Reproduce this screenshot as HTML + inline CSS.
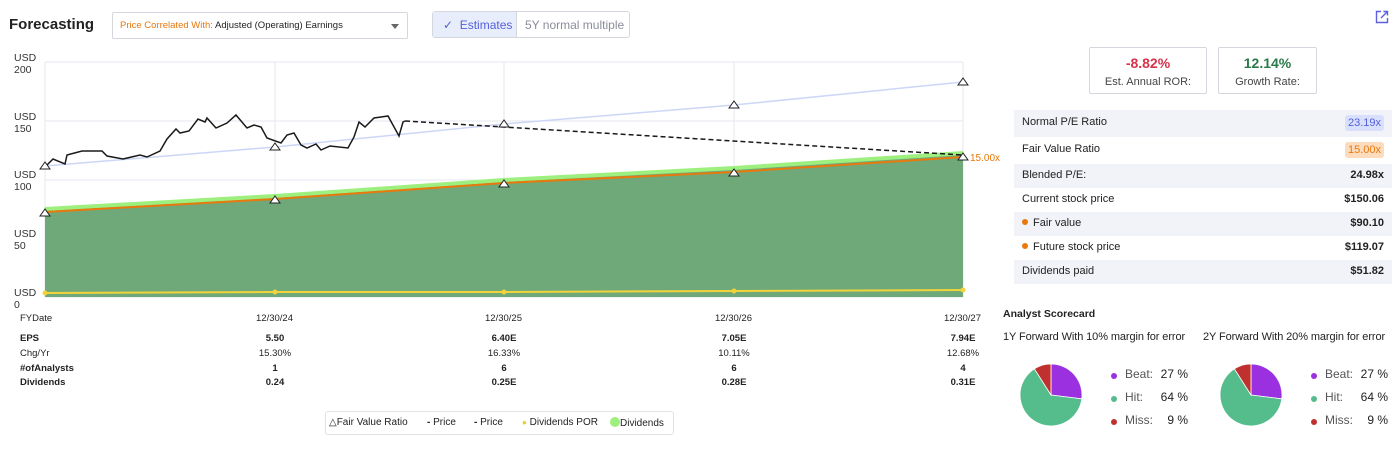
<!DOCTYPE html>
<html><head><meta charset="utf-8"><style>
*{margin:0;padding:0;box-sizing:border-box}
body{width:1400px;height:452px;background:#fff;font-family:"Liberation Sans",sans-serif;color:#222;position:relative;overflow:hidden}
.a{position:absolute;white-space:nowrap}
.t{font-size:10.5px}
.b{font-weight:bold}
.row{position:absolute;left:1014px;width:378px;font-size:11px;color:#222}
.row>span{position:absolute}
.dot{display:inline-block;width:6px;height:6px;border-radius:50%;background:#e8790d;margin-right:5px;vertical-align:1px}
.g{background:#f2f3f8}
</style></head><body>
<div class="a" style="left:9px;top:16px;font-size:15px;font-weight:bold;color:#222">Forecasting</div>
<div class="a" style="left:112px;top:12px;width:296px;height:27px;border:1px solid #d5d7de;border-radius:2px;font-size:9.5px;padding:7px 7px"><span style="color:#e8790d">Price Correlated With:</span> Adjusted (Operating) Earnings<span style="position:absolute;right:8px;top:11px;border:4px solid transparent;border-top:5px solid #666"></span></div>
<div class="a" style="left:432px;top:11px;width:198px;height:27px;border:1px solid #d5d7de;border-radius:3px;font-size:12px">
<div style="position:absolute;left:0;top:0;width:84px;height:25px;background:#e8edfb;color:#5560d8;padding:6px 0 0 10px;border-right:1px solid #d5d7de">✓&nbsp; Estimates</div>
<div style="position:absolute;left:92px;top:6px;color:#8a8d99">5Y normal multiple</div></div>
<svg class="a" style="left:1375px;top:10px" width="14" height="14" viewBox="0 0 14 14" fill="none" stroke="#5b5fe0" stroke-width="1.4"><path d="M6 1.5H1.5v11h11V8"/><path d="M8.5 1.5h4v4M12.5 1.5 6 8"/></svg>

<svg class="a" style="left:0;top:50px" width="1000" height="260" viewBox="0 50 1000 260">
<g stroke="#e6e7ee" stroke-width="1">
<line x1="45" y1="62" x2="963" y2="62"/><line x1="45" y1="121" x2="963" y2="121"/><line x1="45" y1="180" x2="963" y2="180"/><line x1="45" y1="238" x2="963" y2="238"/><line x1="45" y1="297" x2="963" y2="297"/>
<line x1="45" y1="62" x2="45" y2="297"/><line x1="275" y1="62" x2="275" y2="297"/><line x1="504" y1="62" x2="504" y2="297"/><line x1="734" y1="62" x2="734" y2="297"/><line x1="963" y1="62" x2="963" y2="297"/>
</g>
<path d="M45 209 L275 196 L504 180 L734 168 L963 153 L963 297 L45 297Z" fill="#6fa97a"/>
<polyline points="45,209 275,196 504,180 734,168 963,153" fill="none" stroke="#9ef07e" stroke-width="4"/>
<polyline points="45,212 275,199 504,183 734,172 963,157" fill="none" stroke="#e8790d" stroke-width="2"/>
<polyline points="45,293 275,292 504,292 734,291 963,290" fill="none" stroke="#f2d43a" stroke-width="2"/>
<g fill="#f2d43a"><circle cx="45" cy="293" r="2.5"/><circle cx="275" cy="292" r="2.5"/><circle cx="504" cy="292" r="2.5"/><circle cx="734" cy="291" r="2.5"/><circle cx="963" cy="290" r="2.5"/></g>
<polyline points="45,166 275,147 504,124 734,105 963,82" fill="none" stroke="#cdd6f7" stroke-width="1.5"/>
<polyline points="46,166 53,159 65,164 67,155 82,151 102,151 107,156 123,159 140,155 147,157 160,151 167,139 176,129 180,133 189,131 198,119 205,122 207,118 216,128 227,123 236,115 247,128 254,125 261,127 267,138 281,143 287,135 294,133 301,145 307,148 316,144 321,150 330,146 348,148 354,137 359,122 365,127 374,118 388,116 399,136 403,122 405,121" fill="none" stroke="#1a1a1a" stroke-width="1.5"/>
<line x1="405" y1="121" x2="963" y2="155" stroke="#1a1a1a" stroke-width="1.5" stroke-dasharray="5,3"/>
<g fill="#fff" stroke="#222" stroke-width="1">
<path d="M40 169 L45 162 L50 169 Z"/><path d="M270 150 L275 143 L280 150 Z"/><path d="M499 127 L504 120 L509 127 Z"/><path d="M729 108 L734 101 L739 108 Z"/><path d="M958 85 L963 78 L968 85 Z"/>
<path d="M40 216 L45 209 L50 216 Z"/><path d="M270 203 L275 196 L280 203 Z"/><path d="M499 187 L504 180 L509 187 Z"/><path d="M729 176 L734 169 L739 176 Z"/><path d="M958 160 L963 153 L968 160 Z"/>
</g>
<text x="970" y="161" font-size="10" fill="#e8790d" font-family="Liberation Sans">15.00x</text>
</svg>
<div class="a t" style="left:14px;top:52px;line-height:12px;color:#333">USD<br>200</div>
<div class="a t" style="left:14px;top:111px;line-height:12px;color:#333">USD<br>150</div>
<div class="a t" style="left:14px;top:169px;line-height:12px;color:#333">USD<br>100</div>
<div class="a t" style="left:14px;top:228px;line-height:12px;color:#333">USD<br>50</div>
<div class="a t" style="left:14px;top:287px;line-height:12px;color:#333">USD<br>0</div>

<div style="font-size:9.5px">
<div class="a" style="left:20px;top:313px">FYDate</div>
<div class="a" style="left:256px;top:313px">12/30/24</div><div class="a" style="left:485px;top:313px">12/30/25</div><div class="a" style="left:715px;top:313px">12/30/26</div><div class="a" style="left:944px;top:313px">12/30/27</div>
<div class="a b" style="left:20px;top:333px">EPS</div><div class="a" style="left:20px;top:348px">Chg/Yr</div><div class="a b" style="left:20px;top:363px">#ofAnalysts</div><div class="a b" style="left:20px;top:377px">Dividends</div>
</div>
<div style="font-size:9.5px">
<div class="a b" style="left:255px;width:40px;text-align:center;top:333px">5.50</div><div class="a" style="left:255px;width:40px;text-align:center;top:348px">15.30%</div><div class="a b" style="left:255px;width:40px;text-align:center;top:363px">1</div><div class="a b" style="left:255px;width:40px;text-align:center;top:377px">0.24</div>
<div class="a b" style="left:484px;width:40px;text-align:center;top:333px">6.40E</div><div class="a" style="left:484px;width:40px;text-align:center;top:348px">16.33%</div><div class="a b" style="left:484px;width:40px;text-align:center;top:363px">6</div><div class="a b" style="left:484px;width:40px;text-align:center;top:377px">0.25E</div>
<div class="a b" style="left:714px;width:40px;text-align:center;top:333px">7.05E</div><div class="a" style="left:714px;width:40px;text-align:center;top:348px">10.11%</div><div class="a b" style="left:714px;width:40px;text-align:center;top:363px">6</div><div class="a b" style="left:714px;width:40px;text-align:center;top:377px">0.28E</div>
<div class="a b" style="left:943px;width:40px;text-align:center;top:333px">7.94E</div><div class="a" style="left:943px;width:40px;text-align:center;top:348px">12.68%</div><div class="a b" style="left:943px;width:40px;text-align:center;top:363px">4</div><div class="a b" style="left:943px;width:40px;text-align:center;top:377px">0.31E</div>
</div>

<div class="a" style="left:325px;top:411px;width:349px;height:24px;border:1px solid #e0e2e8;border-radius:3px;font-size:10px">
<span style="position:absolute;left:3px;top:5px">△Fair Value Ratio</span>
<span style="position:absolute;left:101px;top:5px"><b>-</b> Price</span>
<span style="position:absolute;left:148px;top:5px"><b>-</b> Price</span>
<span style="position:absolute;left:196px;top:5px"><span style="color:#f2c830;font-size:8px">●</span> Dividends POR</span>
<span style="position:absolute;left:284px;top:5px"><span style="display:inline-block;width:10px;height:10px;border-radius:50%;background:#9ef07e;vertical-align:-1px"></span>Dividends</span>
</div>

<div class="a" style="left:1089px;top:47px;width:118px;height:47px;border:1px solid #d5d7de;border-radius:2px;text-align:center">
<div style="color:#d8324a;font-size:14px;font-weight:bold;margin-top:7px">-8.82%</div><div style="font-size:11px;color:#444;margin-top:5px">Est. Annual ROR:</div></div>
<div class="a" style="left:1218px;top:47px;width:99px;height:47px;border:1px solid #d5d7de;border-radius:2px;text-align:center">
<div style="color:#2a7a48;font-size:14px;font-weight:bold;margin-top:7px">12.14%</div><div style="font-size:11px;color:#444;margin-top:5px">Growth Rate:</div></div>

<div class="row g" style="top:110px;height:27px"><span style="left:8px;top:6px">Normal P/E Ratio</span><span style="right:8px;top:5px;background:#d9e0fd;color:#5560d8;padding:2px 3px;border-radius:3px">23.19x</span></div>
<div class="row" style="top:137px;height:27px"><span style="left:8px;top:6px">Fair Value Ratio</span><span style="right:8px;top:5px;background:#fcdcbc;color:#e8790d;padding:2px 3px;border-radius:3px">15.00x</span></div>
<div class="row g" style="top:164px;height:24px"><span style="left:8px;top:5px">Blended P/E:</span><span class="b" style="right:8px;top:5px">24.98x</span></div>
<div class="row" style="top:188px;height:24px"><span style="left:8px;top:5px">Current stock price</span><span class="b" style="right:8px;top:5px">$150.06</span></div>
<div class="row g" style="top:212px;height:24px"><span style="left:8px;top:5px"><i class="dot"></i>Fair value</span><span class="b" style="right:8px;top:5px">$90.10</span></div>
<div class="row" style="top:236px;height:24px"><span style="left:8px;top:5px"><i class="dot"></i>Future stock price</span><span class="b" style="right:8px;top:5px">$119.07</span></div>
<div class="row g" style="top:260px;height:24px"><span style="left:8px;top:5px">Dividends paid</span><span class="b" style="right:8px;top:5px">$51.82</span></div>

<div class="a" style="left:1003px;top:308px;font-size:10.5px;font-weight:bold">Analyst Scorecard</div>
<div class="a" style="left:1003px;top:331px;font-size:11px;letter-spacing:-0.1px">1Y Forward With 10% margin for error</div>
<div class="a" style="left:1203px;top:331px;font-size:11px;letter-spacing:-0.1px">2Y Forward With 20% margin for error</div>

<svg class="a" style="left:1000px;top:350px" width="400" height="80">
<g transform="translate(51,45)" stroke="#fff" stroke-width="0.8">
<path d="M0 0 L0 -31 A31 31 0 0 1 30.76 3.88 Z" fill="#9b30e0"/>
<path d="M0 0 L30.76 3.88 A31 31 0 1 1 -16.6 -26.2 Z" fill="#55bd8c"/>
<path d="M0 0 L-16.6 -26.2 A31 31 0 0 1 0 -31 Z" fill="#c0302f"/>
</g>
<g transform="translate(251,45)" stroke="#fff" stroke-width="0.8">
<path d="M0 0 L0 -31 A31 31 0 0 1 30.76 3.88 Z" fill="#9b30e0"/>
<path d="M0 0 L30.76 3.88 A31 31 0 1 1 -16.6 -26.2 Z" fill="#55bd8c"/>
<path d="M0 0 L-16.6 -26.2 A31 31 0 0 1 0 -31 Z" fill="#c0302f"/>
</g>
<g font-family="Liberation Sans" font-size="12">
<circle cx="114" cy="26" r="3" fill="#9b30e0"/><text x="125" y="28" fill="#555">Beat:</text><text x="188" y="28" text-anchor="end" fill="#222">27 %</text>
<circle cx="114" cy="49" r="3" fill="#55bd8c"/><text x="125" y="51" fill="#555">Hit:</text><text x="188" y="51" text-anchor="end" fill="#222">64 %</text>
<circle cx="114" cy="72" r="3" fill="#c0302f"/><text x="125" y="74" fill="#555">Miss:</text><text x="188" y="74" text-anchor="end" fill="#222">9 %</text>
<circle cx="314" cy="26" r="3" fill="#9b30e0"/><text x="325" y="28" fill="#555">Beat:</text><text x="388" y="28" text-anchor="end" fill="#222">27 %</text>
<circle cx="314" cy="49" r="3" fill="#55bd8c"/><text x="325" y="51" fill="#555">Hit:</text><text x="388" y="51" text-anchor="end" fill="#222">64 %</text>
<circle cx="314" cy="72" r="3" fill="#c0302f"/><text x="325" y="74" fill="#555">Miss:</text><text x="388" y="74" text-anchor="end" fill="#222">9 %</text>
</g>
</svg>
</body></html>
